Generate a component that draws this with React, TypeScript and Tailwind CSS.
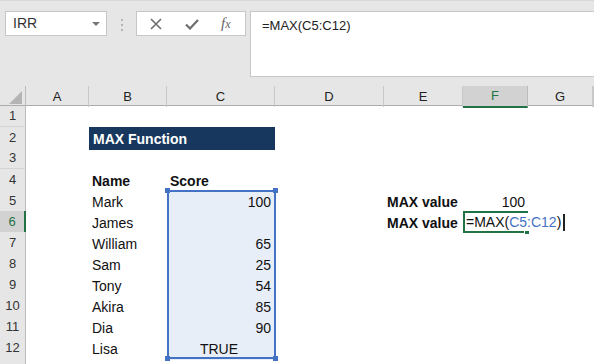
import React from "react";

// --- SHEET DATA ---
const names = ["Mark", "James", "William", "Sam", "Tony", "Akira", "Dia", "Lisa"];
const scores = ["100", "", "65", "25", "54", "85", "90", "TRUE"];
const letters = ["A", "B", "C", "D", "E", "F", "G", ""];

const rowGrid = "grid grid-cols-[26px_63px_78px_108px_109px_79px_65px_65px_1fr]";

function RowHead({ n }: { n: number }) {
  const active = n === 6;
  return (
    <div
      className={`flex items-center justify-center border-b border-[#d4d4d4] text-[13px] ${
        active
          ? "bg-[#d2d2d2] text-[#217346] border-r-2 border-r-[#217346]"
          : "bg-[#e6e6e6] text-[#333] border-r border-r-[#bcbcbc]"
      }`}
    >
      {n <= 12 ? n : ""}
    </div>
  );
}

function Cell({ children, className = "" }: { children?: React.ReactNode; className?: string }) {
  return <div className={`flex items-center pt-[2px] whitespace-nowrap ${className}`}>{children}</div>;
}

function Row({ n }: { n: number }) {
  const i = n - 5;
  return (
    <div className={`${rowGrid} h-[21px] text-[14px] text-[#111]`}>
      <RowHead n={n} />
      {n === 2 ? (
        <>
          <Cell />
          <Cell className="col-span-2 bg-[#17375e] text-white font-bold pl-[4px]">MAX Function</Cell>
        </>
      ) : n === 4 ? (
        <>
          <Cell />
          <Cell className="pl-[3px] font-bold">Name</Cell>
          <Cell className="pl-[3px] font-bold">Score</Cell>
        </>
      ) : n >= 5 && n <= 12 ? (
        <>
          <Cell />
          <Cell className="pl-[3px]">{names[i]}</Cell>
          <Cell
            className={`bg-[#e8eef8] pr-[4px] ${
              scores[i] === "TRUE" ? "justify-center" : "justify-end"
            }`}
          >
            {scores[i]}
          </Cell>
        </>
      ) : (
        <>
          <Cell />
          <Cell />
          <Cell />
        </>
      )}
      <Cell />
      {n === 5 || n === 6 ? <Cell className="pl-[3px] font-bold">MAX value</Cell> : <Cell />}
      {n === 5 ? (
        <Cell className="justify-end pr-[3px]">100</Cell>
      ) : n === 6 ? (
        // cell in edit mode: text runs past the green box
        <div className="relative flex items-center border-2 border-r-0 border-[#217346] pl-[1px] pt-[1px] whitespace-nowrap overflow-visible z-10 h-[22px]">
          <span className="shrink-0">=MAX(</span>
          <span className="shrink-0 text-[#4472c4]">C5:C12</span>
          <span className="shrink-0">)</span>
          <span className="shrink-0 ml-[2px] inline-block w-[2px] h-[17px] bg-[#222]" />
          <span className="absolute right-[-2px] bottom-[-4px] w-[6px] h-[5px] bg-[#217346] border border-white" />
        </div>
      ) : (
        <Cell />
      )}
      <Cell />
      <Cell />
    </div>
  );
}

export default function App() {
  return (
    <div className="w-[594px] h-[364px] overflow-hidden bg-white font-['Liberation_Sans',Arial,sans-serif]">
      {/* --- TOOLBAR / FORMULA BAR --- */}
      <div className="h-[86px] bg-[#e6e6e6] border-t border-[#d8d8d8] flex items-start pl-[5px] pt-[10px]">
        <div className="w-[102px] h-[25px] bg-white border border-[#c6c6c6] flex items-center justify-between pl-[7px] pr-[6px]">
          <span className="text-[14px] text-[#333]">IRR</span>
          <span className="w-0 h-0 border-l-[4px] border-r-[4px] border-t-[4px] border-l-transparent border-r-transparent border-t-[#777]" />
        </div>
        <div className="ml-[14px] mt-[8px] flex flex-col gap-[3px]">
          <span className="w-[2px] h-[2px] bg-[#b4b4b4]" />
          <span className="w-[2px] h-[2px] bg-[#b4b4b4]" />
          <span className="w-[2px] h-[2px] bg-[#b4b4b4]" />
        </div>
        <div className="ml-[13px] w-[110px] h-[25px] bg-white border border-[#c6c6c6] flex items-center">
          <svg width="12" height="12" viewBox="0 0 12 12" className="ml-[13px]">
            <path d="M1 1L11 11M11 1L1 11" stroke="#6e6e6e" strokeWidth="1.6" />
          </svg>
          <svg width="14" height="12" viewBox="0 0 14 12" className="ml-[23px]">
            <path d="M1 6.5L5 10.5L13 2" stroke="#6e6e6e" strokeWidth="2.2" fill="none" />
          </svg>
          <span className="ml-[22px] font-['Liberation_Serif',serif] italic text-[15px] text-[#666]">
            f<span className="text-[12px]">x</span>
          </span>
        </div>
        <div className="ml-[4px] flex-1 h-[66px] bg-white border border-r-0 border-[#c6c6c6] pl-[11px] pt-[4px] text-[13px] text-[#222]">
          =MAX(C5:C12)
        </div>
      </div>

      {/* --- COLUMN HEADERS --- */}
      <div className={`${rowGrid} h-[20px] bg-[#e6e6e6] border-b border-[#ababab] text-[13px] text-[#222]`}>
        <div className="flex items-end justify-end pr-[3px] pb-[3px] border-r border-[#bcbcbc]">
          <svg width="13" height="13" viewBox="0 0 13 13">
            <polygon points="13,0 13,13 0,13" fill="#b4b4b4" />
          </svg>
        </div>
        {letters.map((l) =>
          l === "F" ? (
            <div
              key={l}
              className="flex items-center justify-center bg-[#d2d2d2] text-[#217346] border-r border-[#bcbcbc] border-b-2 border-b-[#217346] -mb-[1px]"
            >
              {l}
            </div>
          ) : (
            <div key={l || "x"} className="flex items-center justify-center border-r border-[#c8c8c8]">
              {l}
            </div>
          )
        )}
      </div>

      {/* --- SHEET ROWS --- */}
      <div className="relative">
        {Array.from({ length: 13 }, (_, k) => (
          <Row key={k} n={k + 1} />
        ))}
        {/* range highlight C5:C12 */}
        <div className="absolute left-[167px] top-[84px] w-[109px] h-[169px] border-2 border-[#4472c4] pointer-events-none">
          <span className="absolute -left-[4px] -top-[4px] w-[5px] h-[5px] bg-[#4472c4]" />
          <span className="absolute -right-[4px] -top-[4px] w-[5px] h-[5px] bg-[#4472c4]" />
          <span className="absolute -left-[4px] -bottom-[4px] w-[5px] h-[5px] bg-[#4472c4]" />
          <span className="absolute -right-[4px] -bottom-[4px] w-[5px] h-[5px] bg-[#4472c4]" />
        </div>
      </div>
    </div>
  );
}
